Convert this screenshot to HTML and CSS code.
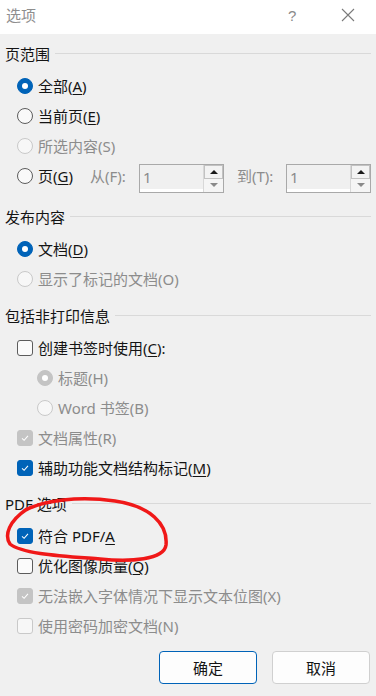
FILE: index.html
```html
<!DOCTYPE html>
<html lang="zh-CN">
<head>
<meta charset="utf-8">
<title>选项</title>
<link rel="stylesheet" href="styles.css">
</head>
<body>
<div class="dialog">
  <div class="titlebar">
    <span class="title">选项</span>
    <span class="help">?</span>
    <span class="close"><svg width="14" height="14" viewBox="0 0 14 14"><path d="M1 1 L13 13 M13 1 L1 13" stroke="#7a7a7a" stroke-width="1.1" fill="none"/></svg></span>
  </div>
  <div class="body">
    <section class="group g1">
      <div class="ghead"><span>页范围</span></div>
      <div class="rows">
        <div class="row"><span class="radio checked"></span><span class="lbl">全部(<u>A</u>)</span></div>
        <div class="row"><span class="radio"></span><span class="lbl">当前页(<u>E</u>)</span></div>
        <div class="row dis"><span class="radio"></span><span class="lbl">所选内容(S)</span></div>
        <div class="row pagerow">
          <span class="radio"></span><span class="lbl pg">页(<u>G</u>)</span>
          <span class="lbl from">从(F):</span>
          <span class="spin"><span class="field">1</span><span class="btns"><span class="up"></span><span class="down"></span></span></span>
          <span class="lbl to">到(T):</span>
          <span class="spin"><span class="field">1</span><span class="btns"><span class="up"></span><span class="down"></span></span></span>
        </div>
      </div>
    </section>
    <section class="group g2">
      <div class="ghead"><span>发布内容</span></div>
      <div class="rows">
        <div class="row"><span class="radio checked"></span><span class="lbl">文档(<u>D</u>)</span></div>
        <div class="row dis"><span class="radio"></span><span class="lbl">显示了标记的文档(O)</span></div>
      </div>
    </section>
    <section class="group g3">
      <div class="ghead"><span>包括非打印信息</span></div>
      <div class="rows">
        <div class="row"><span class="check"></span><span class="lbl">创建书签时使用(<u>C</u>):</span></div>
        <div class="row dis indent"><span class="radio checked"></span><span class="lbl">标题(H)</span></div>
        <div class="row dis indent"><span class="radio"></span><span class="lbl">Word 书签(B)</span></div>
        <div class="row dis"><span class="check checked"><svg viewBox="0 0 16 16"><path d="M4.6 8.3 L7 10.6 L11.4 5.6" stroke="#fff" stroke-width="1.2" fill="none"/></svg></span><span class="lbl">文档属性(R)</span></div>
        <div class="row"><span class="check checked"><svg viewBox="0 0 16 16"><path d="M4.6 8.3 L7 10.6 L11.4 5.6" stroke="#fff" stroke-width="1.2" fill="none"/></svg></span><span class="lbl">辅助功能文档结构标记(<u>M</u>)</span></div>
      </div>
    </section>
    <section class="group g4">
      <div class="ghead"><span>PDF 选项</span></div>
      <div class="rows">
        <div class="row"><span class="check checked"><svg viewBox="0 0 16 16"><path d="M4.6 8.3 L7 10.6 L11.4 5.6" stroke="#fff" stroke-width="1.2" fill="none"/></svg></span><span class="lbl">符合 PDF/<u>A</u></span></div>
        <div class="row"><span class="check"></span><span class="lbl">优化图像质量(<u>Q</u>)</span></div>
        <div class="row dis"><span class="check checked"><svg viewBox="0 0 16 16"><path d="M4.6 8.3 L7 10.6 L11.4 5.6" stroke="#fff" stroke-width="1.2" fill="none"/></svg></span><span class="lbl">无法嵌入字体情况下显示文本位图(X)</span></div>
        <div class="row dis"><span class="check"></span><span class="lbl">使用密码加密文档(N)</span></div>
      </div>
    </section>
    <div class="buttons">
      <span class="btn primary">确定</span>
      <span class="btn">取消</span>
    </div>
  </div>
  <svg class="annot" width="376" height="696" viewBox="0 0 376 696">
    <path d="M24 511 C42 500 80 496 115 501 C150 506 168 524 166 545 C164 560 130 562 100 559 C62 556 22 554 10 544 C4 535 9 521 27 509" stroke="#f01818" stroke-width="3.5" fill="none" stroke-linecap="round" stroke-linejoin="round"/>
  </svg>
</div>
</body>
</html>
```

FILE: styles.css
```css
* { box-sizing: border-box; }
html, body { margin: 0; padding: 0; }
body {
  font-family: "Noto Sans", "Noto Sans CJK SC", sans-serif;
  font-size: 15px;
  color: #141414;
  background: #f0f0f0;
}
.dialog {
  position: relative;
  width: 376px;
  height: 696px;
  background: #f0f0f0;
  overflow: hidden;
}
.titlebar {
  height: 34px;
  background: #ffffff;
  display: flex;
  align-items: center;
  padding-left: 6px;
}
.title {
  color: #8e8e8e;
  line-height: 20px;
  flex: 1;
  margin-top: -4px;
}
.help {
  color: #8a8a8a;
  font-size: 15px;
  width: 20px;
  margin-right: 33px;
  margin-top: -4px;
  font-family: "Liberation Sans", sans-serif;
}
.close {
  width: 14px;
  height: 14px;
  display: flex;
  margin-right: 21px;
  margin-top: -4px;
}
.body {
  padding: 6px 5px 0 5px;
}
.group.g2 { margin-top: 12px; }
.group.g3 { margin-top: 8px; }
.group.g4 { margin-top: 7px; }
.ghead {
  height: 28px;
  display: flex;
  align-items: center;
  line-height: 20px;
}
.ghead::after {
  content: "";
  flex: 1;
  height: 1px;
  background: #d9d9d9;
  margin-left: 5px;
  margin-top: -1px;
}
.rows {
  margin-top: 3px;
}
.row {
  height: 30px;
  display: flex;
  align-items: center;
  padding-left: 12px;
  line-height: 20px;
}
.row.indent { padding-left: 32px; }
.lbl {
  margin-left: 5px;
  white-space: nowrap;
}
u {
  text-decoration-thickness: 1px;
  text-underline-offset: 2px;
}
.row.dis .lbl { color: #8c8c8c; }
.radio {
  width: 16px;
  height: 16px;
  border-radius: 50%;
  border: 1px solid #5c5c5c;
  background: #f9f9f9;
  display: flex;
  align-items: center;
  justify-content: center;
  flex: none;
}
.radio.checked {
  background: #0063b8;
  border-color: #0063b8;
}
.radio.checked::after {
  content: "";
  width: 6px;
  height: 6px;
  border-radius: 50%;
  background: #ffffff;
}
.row.dis .radio {
  border-color: #c9c9c9;
  background: #f7f7f7;
}
.row.dis .radio.checked {
  background: #c4c4c4;
  border-color: #c4c4c4;
}
.check {
  width: 16px;
  height: 16px;
  border-radius: 3px;
  border: 1px solid #5c5c5c;
  background: #fbfbfb;
  flex: none;
  display: flex;
}
.check svg { width: 14px; height: 14px; }
.check.checked {
  background: #0063b8;
  border-color: #0063b8;
}
.row.dis .check {
  border-color: #c9c9c9;
  background: #f7f7f7;
}
.row.dis .check.checked {
  background: #c4c4c4;
  border-color: #c4c4c4;
}
.lbl.pg { width: 47px; }
.lbl.from { width: 49px; color: #8c8c8c; margin-left: 5px; }
.lbl.to { width: 49px; color: #8c8c8c; margin-left: 13px; }
.spin {
  width: 85px;
  height: 29px;
  margin-top: 4px;
  border: 1px solid #a9a9a9;
  display: flex;
  background: #f0f0f0;
  flex: none;
}
.field {
  flex: 1;
  color: #8a8a8a;
  padding-left: 3px;
  line-height: 24px;
  border-bottom: 3px solid #ffffff;
}
.btns {
  width: 20px;
  display: flex;
  flex-direction: column;
  border-left: 1px solid #d8d8d8;
}
.up {
  height: 14px;
  border: 1px solid #c2c2c2;
  background: #f3f3f3;
  display: flex;
  align-items: center;
  justify-content: center;
}
.up::after {
  content: "";
  width: 0;
  height: 0;
  border-left: 4px solid transparent;
  border-right: 4px solid transparent;
  border-bottom: 4px solid #1a1a1a;
}
.down {
  flex: 1;
  background: #f5f5f5;
  display: flex;
  align-items: center;
  justify-content: center;
}
.down::after {
  content: "";
  width: 0;
  height: 0;
  border-left: 4px solid transparent;
  border-right: 4px solid transparent;
  border-top: 4px solid #8a8a8a;
}
.buttons {
  display: flex;
  justify-content: flex-end;
  gap: 15px;
  margin-top: 10px;
  padding-right: 1px;
}
.btn {
  width: 98px;
  height: 33px;
  border: 1px solid #d0d0d0;
  border-radius: 4px;
  background: #fdfdfd;
  display: flex;
  align-items: center;
  justify-content: center;
  line-height: 20px;
}
.btn.primary {
  border-color: #0063b8;
}
.annot {
  position: absolute;
  left: 0;
  top: 0;
  pointer-events: none;
}
```
